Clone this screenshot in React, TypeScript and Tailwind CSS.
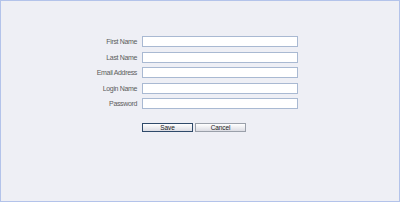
import React from "react";

const fields = ["First Name", "Last Name", "Email Address", "Login Name", "Password"];

export default function App() {
  return (
    <div
      className="w-[400px] h-[202px] border border-[#b3c3ea] bg-[#eeeff5] flex flex-col pt-[35px]"
      style={{ fontFamily: '"Liberation Sans", Arial, sans-serif' }}
    >
      <div className="flex flex-col gap-[4.5px]">
        {fields.map((f) => (
          <div key={f} className="flex items-center h-[11px]">
            <div className="w-[136px] text-right text-[7px] leading-[11px] text-[#5c5c5c] tracking-[-0.35px]">
              {f}
            </div>
            <input
              type={f === "Password" ? "password" : "text"}
              className="ml-[5px] w-[156px] h-[11px] bg-white border border-[#a9b9d2] outline-none"
            />
          </div>
        ))}
      </div>
      <div className="flex ml-[141px] mt-[14px] gap-[2px]">
        <button className="w-[51px] h-[9px] border border-[#2f4a6a] bg-gradient-to-b from-[#ffffff] to-[#dcdde4] text-[6.5px] leading-[7px] text-[#222] tracking-[-0.1px] flex items-center justify-center">
          Save
        </button>
        <button className="w-[51px] h-[9px] border border-[#9aa0aa] bg-gradient-to-b from-[#ffffff] to-[#dcdde4] text-[6.5px] leading-[7px] text-[#222] tracking-[-0.1px] flex items-center justify-center">
          Cancel
        </button>
      </div>
    </div>
  );
}
